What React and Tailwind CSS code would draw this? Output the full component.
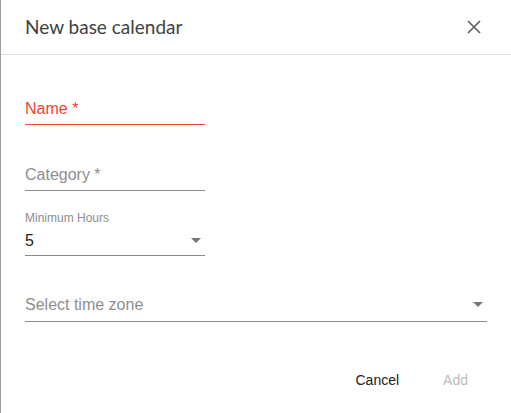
import React from 'react';

const Caret = () => (
  <svg width="10" height="5" viewBox="0 0 10 5" className="shrink-0">
    <path d="M0 0h10L5 5z" fill="#757575" />
  </svg>
);

export default function App() {
  return (
    <div className="w-[511px] h-[413px] bg-white border-l border-[#9e9e9e] flex flex-col font-['Liberation_Sans',Arial,sans-serif] overflow-hidden">
      {/* Header */}
      <div className="h-[55px] shrink-0 flex items-center justify-between pl-[24px] pr-[30px] border-b border-[#e0e0e0]">
        <div className="font-['Lato',sans-serif] text-[19px] text-[#424242] leading-none pb-[1px]">New base calendar</div>
        <svg width="14" height="14" viewBox="0 0 14 14">
          <path d="M1 1l12 12M13 1L1 13" stroke="#616161" strokeWidth="1.7" />
        </svg>
      </div>

      {/* Form */}
      <div className="flex flex-col pl-[24px] pr-[24px]">
        <div className="mt-[44px] w-[180px] border-b border-[#f44336] pb-[6px]">
          <div className="text-[16px] leading-[19px] text-[#f44336]">Name *</div>
        </div>

        <div className="mt-[40px] w-[180px] border-b border-[#8a8a8a] pb-[6px]">
          <div className="text-[16px] leading-[19px] text-[#8e8e8e]">Category *</div>
        </div>

        <div className="mt-[20px] w-[180px] border-b border-[#8a8a8a] pb-[5px]">
          <div className="text-[12px] leading-[14px] text-[#8e8e8e]">Minimum Hours</div>
          <div className="mt-[6px] flex items-center justify-between pr-[4px]">
            <div className="text-[16px] leading-[19px] text-[#212121]">5</div>
            <Caret />
          </div>
        </div>

        <div className="mt-[39px] w-[462px] border-b border-[#8a8a8a] pb-[7px] flex items-center justify-between pr-[4px]">
          <div className="text-[16px] leading-[19px] text-[#8e8e8e]">Select time zone</div>
          <Caret />
        </div>

        <div className="mt-[50px] flex justify-end items-center pr-[19px] text-[14px] leading-[17px]">
          <button className="text-[#212121]">Cancel</button>
          <button className="ml-[44px] text-[#bdbdbd]">Add</button>
        </div>
      </div>
    </div>
  );
}
